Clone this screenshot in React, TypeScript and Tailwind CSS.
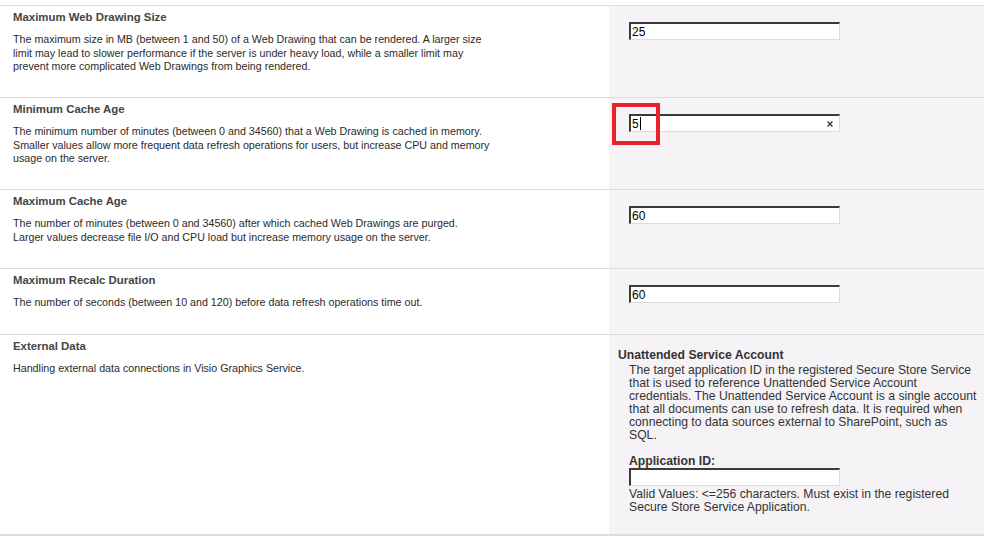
const font = { fontFamily: '"Liberation Sans", Arial, sans-serif' };

type FieldProps = {
  value: string;
  focused?: boolean;
};

function Field({ value, focused }: FieldProps) {
  return (
    <div className="relative flex h-[18px] w-[211px] items-center border-t-2 border-l-2 border-b border-r border-t-[#3a3a3a] border-l-[#3a3a3a] border-b-[#dcdcdc] border-r-[#dcdcdc] bg-white pl-[1px] text-[12px] text-black">
      <span>{value}</span>
      {focused && (
        <>
          <span className="ml-[1px] inline-block h-[13px] w-[1px] bg-black" />
          <svg className="absolute right-[6px] top-[5px]" width="6" height="6" viewBox="0 0 6 6">
            <path d="M0.5 0.5L5.5 5.5M5.5 0.5L0.5 5.5" stroke="#333" strokeWidth="1.3" />
          </svg>
          {/* red highlight box */}
          <div className="pointer-events-none absolute left-[-19px] top-[-13px] h-[42px] w-[48px] border-4 border-[#e8212b]" />
        </>
      )}
    </div>
  );
}

// lines are kept as in the original page so wrapping matches
function Lines({ lines }: { lines: string[] }) {
  return (
    <>
      {lines.map((l, i) => (
        <div key={i} className="whitespace-nowrap">
          {l}
        </div>
      ))}
    </>
  );
}

type RowProps = {
  title: string;
  desc: string[];
  height: string;
  value: string;
  focused?: boolean;
};

function Row({ title, desc, height, value, focused }: RowProps) {
  return (
    <div className={`flex border-t border-[#dcdcdc] ${height}`}>
      <div className="w-[609px] pl-[13px] pt-[5px]">
        <div className="mb-[9px] text-[11.4px] font-bold leading-[13px] text-[#444]">{title}</div>
        <div className="text-[10.7px] leading-[13.5px] text-[#2b2b2b]">
          <Lines lines={desc} />
        </div>
      </div>
      <div className="flex-1 bg-[#f6f3f6] pl-[20px] pt-[16px]">
        <Field value={value} focused={focused} />
      </div>
    </div>
  );
}

export default function App() {
  return (
    <div className="min-h-screen bg-white pt-[5px]" style={font}>
      <div className="w-[984px]">
        <Row
          title="Maximum Web Drawing Size"
          desc={[
            'The maximum size in MB (between 1 and 50) of a Web Drawing that can be rendered. A larger size',
            'limit may lead to slower performance if the server is under heavy load, while a smaller limit may',
            'prevent more complicated Web Drawings from being rendered.',
          ]}
          height="h-[92px]"
          value="25"
        />
        <Row
          title="Minimum Cache Age"
          desc={[
            'The minimum number of minutes (between 0 and 34560) that a Web Drawing is cached in memory.',
            'Smaller values allow more frequent data refresh operations for users, but increase CPU and memory',
            'usage on the server.',
          ]}
          height="h-[92px]"
          value="5"
          focused
        />
        <Row
          title="Maximum Cache Age"
          desc={[
            'The number of minutes (between 0 and 34560) after which cached Web Drawings are purged.',
            'Larger values decrease file I/O and CPU load but increase memory usage on the server.',
          ]}
          height="h-[79px]"
          value="60"
        />
        <Row
          title="Maximum Recalc Duration"
          desc={['The number of seconds (between 10 and 120) before data refresh operations time out.']}
          height="h-[66px]"
          value="60"
        />
        <div className="flex h-[202px] border-t border-b-2 border-[#dcdcdc]">
          <div className="w-[609px] pl-[13px] pt-[5px]">
            <div className="mb-[9px] text-[11.4px] font-bold leading-[13px] text-[#444]">External Data</div>
            <div className="text-[10.7px] leading-[13.5px] text-[#2b2b2b]">
              Handling external data connections in Visio Graphics Service.
            </div>
          </div>
          <div className="flex-1 bg-[#f6f3f6] pl-[9px] pt-[14px] text-[12.2px] leading-[13px] text-[#333]">
            <div className="mb-[2px] font-bold">Unattended Service Account</div>
            <div className="pl-[11px]">
              <Lines
                lines={[
                  'The target application ID in the registered Secure Store Service',
                  'that is used to reference Unattended Service Account',
                  'credentials. The Unattended Service Account is a single account',
                  'that all documents can use to refresh data. It is required when',
                  'connecting to data sources external to SharePoint, such as',
                  'SQL.',
                ]}
              />
              <div className="mt-[13px] font-bold">Application ID:</div>
              <div className="mb-[2px]">
                <Field value="" />
              </div>
              <Lines
                lines={[
                  'Valid Values: <=256 characters. Must exist in the registered',
                  'Secure Store Service Application.',
                ]}
              />
            </div>
          </div>
        </div>
      </div>
    </div>
  );
}
